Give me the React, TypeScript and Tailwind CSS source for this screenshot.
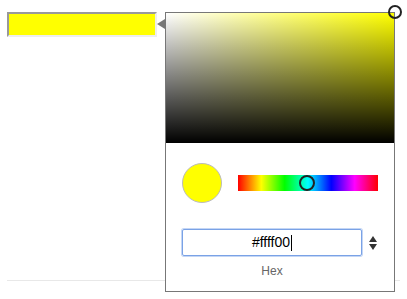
import React from "react";

// colour picker popover opened from a swatch input
export default function App() {
  return (
    <div className="relative h-[299px] w-[407px] bg-white font-['Liberation_Sans',Arial,sans-serif]">
      <div className="px-[7px] pt-[12px]">
        <div className="h-[25px] w-[150px] border-2 border-t-[#999] border-l-[#999] border-b-[#eee] border-r-[#eee] bg-[#ffff00]" />
        <div className="mt-[243px] h-px w-full bg-[#e8e8e8]" />
      </div>

      {/* pointer */}
      <div className="absolute left-[157px] top-[19px] h-0 w-0 border-y-[5px] border-r-[8px] border-y-transparent border-r-[#777]" />

      {/* popover */}
      <div className="absolute left-[165px] top-[12px] flex h-[280px] w-[230px] flex-col border border-[#777] bg-white">
        <div className="relative h-[130px] w-full bg-[#ffff00] bg-[linear-gradient(to_top,#000,transparent),linear-gradient(to_right,#fff,transparent)]">
          <div className="absolute -right-[8px] -top-[8px] h-[14px] w-[14px] rounded-full border-2 border-[#222]" />
        </div>

        <div className="flex items-center gap-4 px-4 pt-5">
          <div className="h-[40px] w-[40px] rounded-full border border-[#bbb] bg-[#ffff00]" />
          <div className="relative h-[16px] flex-1 bg-[linear-gradient(to_right,#f00,#ff0,#0f0,#0ff,#00f,#f0f,#f00)]">
            <div className="absolute left-[61px] top-[-0.5px] h-[16px] w-[16px] rounded-full border-2 border-[#222]" />
          </div>
        </div>

        <div className="mt-[26px] flex items-center gap-[7px] pl-4">
          <div className="flex h-[27px] w-[180px] items-center justify-center rounded-[2px] border border-[#7aa2e6] text-[14px] text-black ring-1 ring-[#c4d6f5]">
            #ffff00<span className="ml-px h-[16px] w-px bg-black" />
          </div>
          <div className="flex flex-col items-center gap-[2px]">
            <div className="h-0 w-0 border-x-[4px] border-b-[6px] border-x-transparent border-b-[#333]" />
            <div className="h-0 w-0 border-x-[4px] border-t-[6px] border-x-transparent border-t-[#333]" />
          </div>
        </div>

        <div className="pl-4">
          <div className="w-[180px] pt-[6px] text-center text-[12px] text-[#666]">Hex</div>
        </div>
      </div>
    </div>
  );
}
